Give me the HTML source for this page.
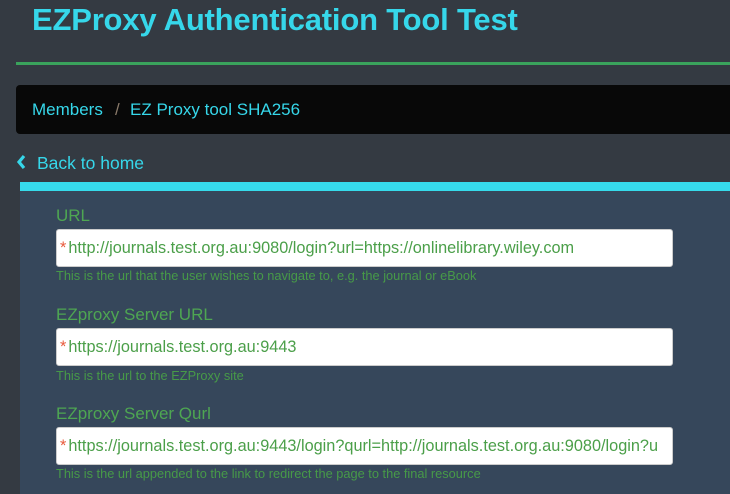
<!DOCTYPE html>
<html><head><style>
body{margin:0;width:730px;height:494px;overflow:hidden;background:#343a42;font-family:"Liberation Sans",sans-serif;position:relative}
.a{position:absolute}
h1{position:absolute;left:32px;top:2px;margin:0;font-size:31px;font-weight:bold;color:#36d7ea;letter-spacing:-0.2px}
.line{left:16px;top:62px;width:714px;height:3px;background:#3aa35c}
.bc{left:16px;top:85px;width:720px;height:49px;background:#080808;border-radius:4px}
.bc span{position:absolute;top:15px;font-size:17px;color:#36d7ea}
.back{left:16px;top:153px;font-size:17.5px;color:#36d7ea}
.bar{left:20px;top:182px;width:710px;height:9px;background:#36dbec}
.panel{left:20px;top:191px;width:710px;height:303px;background:#36475b}
.lab{left:56px;font-size:17px;color:#4ea652}
.inp{left:56px;width:615px;height:36px;background:#fff;border:1px solid #ccc;border-radius:3px;font-size:16.3px;color:#4b9f49;line-height:36px;white-space:nowrap;overflow:hidden}
.inp b{color:#e85a3c;font-weight:normal;margin:0 2px 0 3px}
.help{left:56px;font-size:12.8px;color:#479a48}
</style></head><body>
<h1>EZProxy Authentication Tool Test</h1>
<div class="a line"></div>
<div class="a bc"><span style="left:16px">Members</span><span style="left:99px;color:#8a7a6a">/</span><span style="left:114px">EZ Proxy tool SHA256</span></div>
<div class="a back"><svg width="12" height="16" viewBox="0 0 12 16" style="margin-right:9px;vertical-align:-1px"><path d="M8 2L3 8l5 6" stroke="#36d7ea" stroke-width="3.2" fill="none"/></svg>Back to home</div>
<div class="a bar"></div>
<div class="a panel"></div>
<div class="a lab" style="top:206px">URL</div>
<div class="a inp" style="top:229px"><b>*</b>http://journals.test.org.au:9080/login?url=https://onlinelibrary.wiley.com</div>
<div class="a help" style="top:268px">This is the url that the user wishes to navigate to, e.g. the journal or eBook</div>
<div class="a lab" style="top:305px">EZproxy Server URL</div>
<div class="a inp" style="top:328px"><b>*</b>https://journals.test.org.au:9443</div>
<div class="a help" style="top:368px">This is the url to the EZProxy site</div>
<div class="a lab" style="top:404px">EZproxy Server Qurl</div>
<div class="a inp" style="top:427px"><b>*</b>https://journals.test.org.au:9443/login?qurl=http://journals.test.org.au:9080/login?u</div>
<div class="a help" style="top:466px">This is the url appended to the link to redirect the page to the final resource</div>
</body></html>
